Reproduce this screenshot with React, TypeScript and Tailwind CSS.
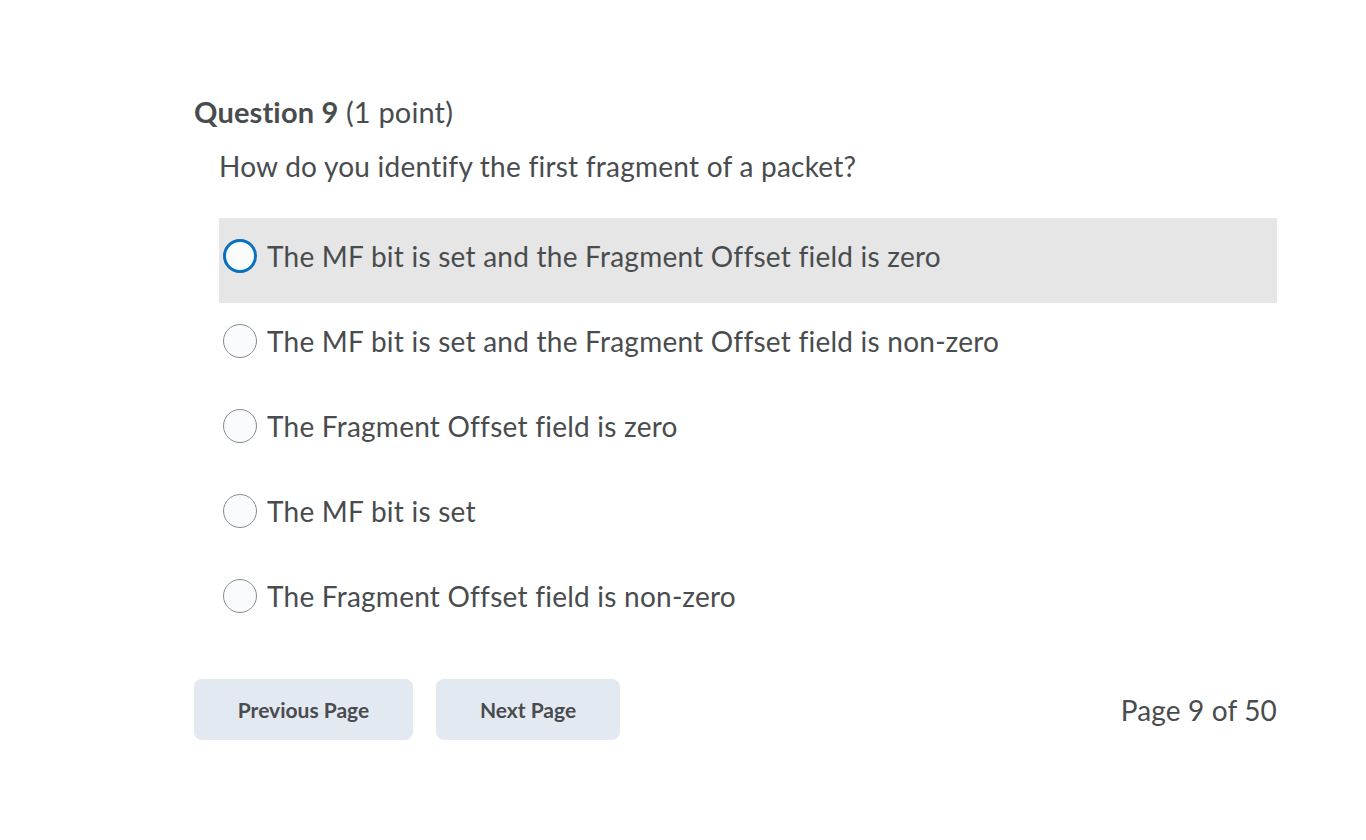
import React from 'react';

const options = [
  'The MF bit is set and the Fragment Offset field is zero',
  'The MF bit is set and the Fragment Offset field is non-zero',
  'The Fragment Offset field is zero',
  'The MF bit is set',
  'The Fragment Offset field is non-zero',
];

export default function App() {
  return (
    <div
      className="min-h-[840px] bg-white text-[#494c4e] [font-variant-ligatures:none]"
      style={{ fontFamily: 'Lato, "Open Sans", sans-serif' }}
    >
      <div className="ml-[194px] w-[1083px] pt-[93px]">
        <h2 className="text-[29px] leading-[38px] tracking-[0.15px]">
          <span className="font-bold">Question 9</span> (1 point)
        </h2>
        <div className="pl-[25px]">
          <p className="mt-[19px] text-[28px] leading-[32px] tracking-[0.24px]">
            How do you identify the first fragment of a packet?
          </p>
          <div className="mt-[36px] flex flex-col">
            {options.map((o, i) => (
              <div
                key={o}
                className={`flex h-[85px] items-center pb-[10px] pl-[4px] ${i === 0 ? 'bg-[#e6e6e6]' : ''}`}
              >
                <span
                  className={`h-[34px] w-[34px] shrink-0 rounded-full bg-[#f9fbff] ${
                    i === 0 ? 'border-[3px] border-[#0670c1]' : 'border border-[#868c8f]'
                  }`}
                />
                <span className="ml-[10px] text-[28px] leading-[32px] tracking-[0.24px]">{o}</span>
              </div>
            ))}
          </div>
        </div>
        <div className="mt-[36px] flex items-center">
          <button className="h-[61px] w-[219px] rounded-[8px] bg-[#e3e9f1] text-[21px] font-bold text-[#494c4e]">
            Previous Page
          </button>
          <button className="ml-[23px] h-[61px] w-[184px] rounded-[8px] bg-[#e3e9f1] text-[21px] font-bold text-[#494c4e]">
            Next Page
          </button>
          <span className="ml-auto text-[28px] tracking-[0.15px]">Page 9 of 50</span>
        </div>
      </div>
    </div>
  );
}
